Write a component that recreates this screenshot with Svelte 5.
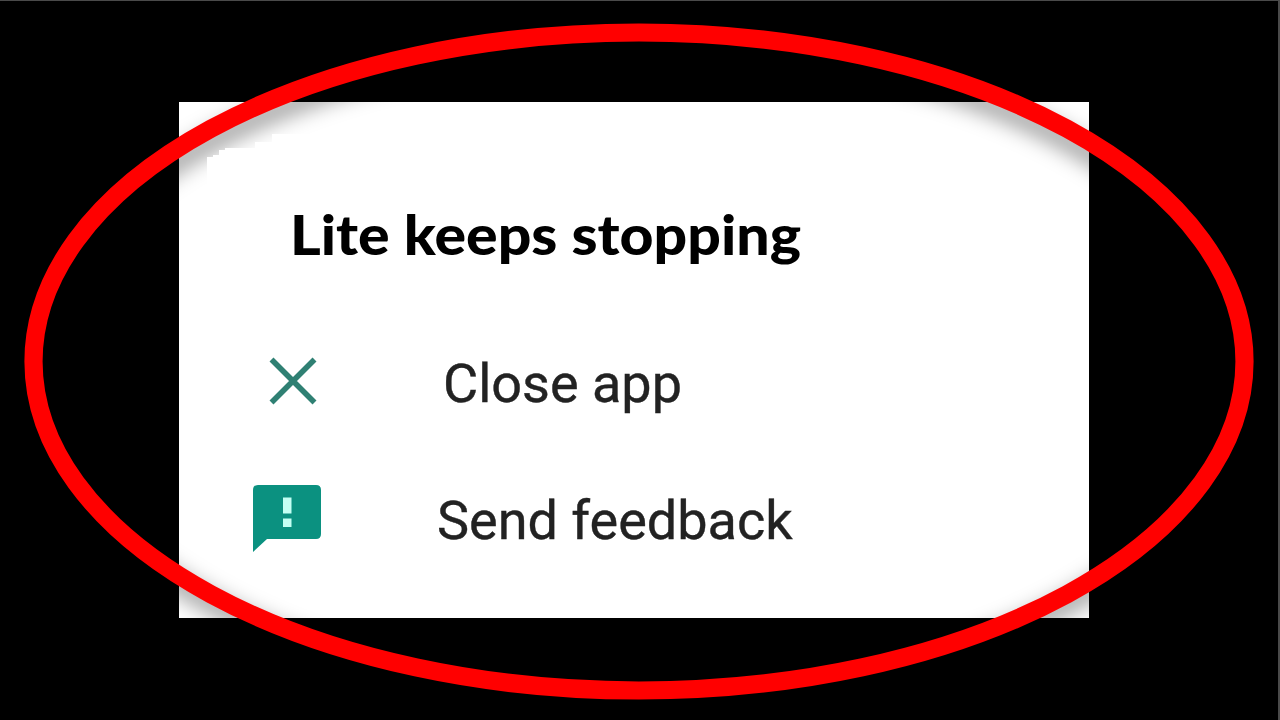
<script>
  const title = 'Lite keeps stopping';
  const actions = [
    { id: 'close', label: 'Close app' },
    { id: 'feedback', label: 'Send feedback' }
  ];
</script>

<main class="screen">
  <section class="dialog">
    <h1 class="title">{title}</h1>
    <ul class="actions">
      {#each actions as action}
        <li class="action {action.id}">
          <span class="icon">
            {#if action.id === 'close'}
              <svg width="48" height="48" viewBox="0 0 48 48">
                <path d="M2.5 2.5 L45.5 45.5 M45.5 2.5 L2.5 45.5" fill="none" stroke="#2f8073" stroke-width="5.6" />
              </svg>
            {:else}
              <svg width="69" height="68" viewBox="0 0 69 68">
                <path d="M5 1H63Q68 1 68 6V50Q68 55 63 55H14L0 68V6Q0 1 5 1Z" fill="#0b9180" />
                <path d="M30 13.5H38.5V29.5H30ZM30 34.5H38.5V43H30Z" fill="#c4fff3" />
              </svg>
            {/if}
          </span>
          <span class="label">{action.label}</span>
        </li>
      {/each}
    </ul>
  </section>

  <!-- Red ring around the dialog -->
  <svg class="ring" width="1280" height="720" viewBox="0 0 1280 720">
    <defs>
      <filter id="soft" x="-10%" y="-10%" width="120%" height="120%">
        <feGaussianBlur stdDeviation="10" />
      </filter>
    </defs>
    <ellipse cx="640" cy="372" rx="603" ry="328" fill="none" stroke="#000" stroke-opacity="0.34" stroke-width="22" filter="url(#soft)" />
    <path d="M207 157H213V155H219V150H225V148H255V142H272V134H340V240H207Z" fill="#fff" />
    <ellipse cx="639" cy="361.5" rx="605.5" ry="329" fill="none" stroke="#f00" stroke-width="18.2" />
  </svg>
</main>

<style>
  :global(body) {
    margin: 0;
    background: #000;
  }

  .screen {
    position: relative;
    box-sizing: border-box;
    width: 1280px;
    height: 720px;
    padding: 101px 0 0 179px;
    background: #000;
    border-top: 1px solid #4a4a4a;
    border-right: 2px solid #4a4a4a;
    overflow: hidden;
  }

  .dialog {
    box-sizing: border-box;
    width: 910px;
    height: 515.5px;
    padding: 97px 0 0 74px;
    background: #fff;
  }

  .title {
    position: relative;
    z-index: 2;
    width: max-content;
    margin: 0 0 0 37px;
    font: 900 56px/70px Lato, 'Open Sans', sans-serif;
    color: #000;
    white-space: nowrap;
    transform: scaleX(1.053);
    transform-origin: 0 50%;
  }

  .actions {
    margin: 0;
    padding: 44px 0 0;
    list-style: none;
  }

  .action {
    position: relative;
    z-index: 2;
    display: flex;
    align-items: center;
    height: 138px;
    margin-top: -1px;
  }

  .icon {
    display: flex;
    width: 184px;
  }

  .icon svg {
    display: block;
  }

  .close .icon {
    box-sizing: border-box;
    width: 190px;
    padding-left: 16px;
  }

  .label {
    padding-top: 6px;
    font: 400 54px/64px Roboto, sans-serif;
    color: #222;
    -webkit-text-stroke: 0.4px #222;
    white-space: nowrap;
  }

  .ring {
    position: absolute;
    top: -1px;
    left: 0;
    z-index: 1;
    pointer-events: none;
  }
</style>
